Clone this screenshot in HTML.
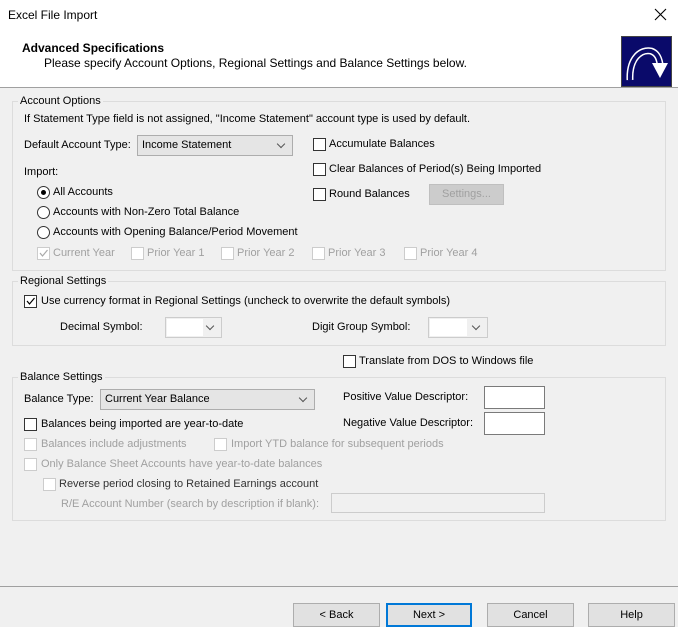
<!DOCTYPE html>
<html><head><meta charset="utf-8"><style>
*{box-sizing:border-box;margin:0;padding:0}
body{width:678px;height:620px;overflow:hidden;background:#f0f0f0;font-family:"Liberation Sans",sans-serif;font-size:11px;color:#000;position:relative}
.t{position:absolute;white-space:nowrap;line-height:16px}
.d{color:#a0a0a0}
.cb{position:absolute;width:13px;height:13px;border:1px solid #333;background:#fff}
.cb.dis{border-color:#ccc}
.rb{position:absolute;width:13px;height:13px;border:1px solid #333;border-radius:50%;background:#fff}
.grp{position:absolute;border:1px solid #dcdcdc}
.lbl{position:absolute;background:#f0f0f0;padding:0 2px;line-height:16px}
.combo{position:absolute;border:1px solid #adadad;background:#e5e5e5;line-height:19px;padding-left:4px}
.combo::after{content:"";position:absolute;right:8px;top:5px;width:5px;height:5px;border-right:1px solid #555;border-bottom:1px solid #555;transform:rotate(45deg)}
.box{position:absolute;border:1px solid #7a7a7a;background:#fff}
.btn{position:absolute;border:1px solid #adadad;background:#e1e1e1;text-align:center;line-height:23px}
</style></head><body>
<div style="position:absolute;left:0;top:0;width:678px;height:88px;background:#fff;border-bottom:1px solid #a0a0a0"></div>
<div class="t" style="left:8px;top:7px;font-size:12px">Excel File Import</div>
<svg style="position:absolute;left:654px;top:8px" width="13" height="13"><path d="M1 1L12 12M12 1L1 12" stroke="#000" stroke-width="1.1"/></svg>
<div class="t" style="left:22px;top:40px;font-weight:bold;font-size:12px">Advanced Specifications</div>
<div class="t" style="left:44px;top:55px;font-size:12px">Please specify Account Options, Regional Settings and Balance Settings below.</div>
<div style="position:absolute;left:621px;top:36px;width:51px;height:51px;background:#0a0a6a;border:1px solid #444"></div>
<svg style="position:absolute;left:621px;top:36px" width="51" height="51"><path d="M9 44 C8 22,20 13,30 15 C36 17,38 22,39 28" fill="none" stroke="#fff" stroke-width="7"/><path d="M9 44 C8 22,20 13,30 15 C36 17,38 22,39 28" fill="none" stroke="#0a0a6a" stroke-width="4"/><path d="M31 27L47 27L39 42Z" fill="#fff"/></svg>

<div class="grp" style="left:12px;top:101px;width:654px;height:170px"></div>
<div class="lbl" style="left:18px;top:93px">Account Options</div>
<div class="t" style="left:24px;top:111px">If Statement Type field is not assigned, "Income Statement" account type is used by default.</div>
<div class="t" style="left:24px;top:137px">Default Account Type:</div>
<div class="combo" style="left:137px;top:135px;width:156px;height:21px">Income Statement</div>
<div class="cb" style="left:313px;top:138px"></div><div class="t" style="left:329px;top:136px">Accumulate Balances</div>
<div class="cb" style="left:313px;top:163px"></div><div class="t" style="left:329px;top:161px">Clear Balances of Period(s) Being Imported</div>
<div class="cb" style="left:313px;top:188px"></div><div class="t" style="left:329px;top:186px">Round Balances</div>
<div class="btn d" style="left:429px;top:184px;width:75px;height:21px;line-height:19px;background:#ccc;border-color:#bfbfbf">Settings...</div>
<div class="t" style="left:24px;top:164px">Import:</div>
<div class="rb" style="left:37px;top:186px"><div style="position:absolute;left:3px;top:3px;width:5px;height:5px;border-radius:50%;background:#000"></div></div><div class="t" style="left:53px;top:184px">All Accounts</div>
<div class="rb" style="left:37px;top:206px"></div><div class="t" style="left:53px;top:204px">Accounts with Non-Zero Total Balance</div>
<div class="rb" style="left:37px;top:226px"></div><div class="t" style="left:53px;top:224px">Accounts with Opening Balance/Period Movement</div>
<div class="cb dis" style="left:37px;top:247px"><svg width="11" height="11" style="position:absolute;left:0;top:0"><path d="M2 5L4.5 8L9.5 2" fill="none" stroke="#aaa" stroke-width="1.2"/></svg></div><div class="t d" style="left:53px;top:245px">Current Year</div>
<div class="cb dis" style="left:131px;top:247px"></div><div class="t d" style="left:147px;top:245px">Prior Year 1</div>
<div class="cb dis" style="left:221px;top:247px"></div><div class="t d" style="left:237px;top:245px">Prior Year 2</div>
<div class="cb dis" style="left:312px;top:247px"></div><div class="t d" style="left:328px;top:245px">Prior Year 3</div>
<div class="cb dis" style="left:404px;top:247px"></div><div class="t d" style="left:420px;top:245px">Prior Year 4</div>

<div class="grp" style="left:12px;top:281px;width:654px;height:65px"></div>
<div class="lbl" style="left:18px;top:273px">Regional Settings</div>
<div class="cb" style="left:24px;top:295px"><svg width="11" height="11" style="position:absolute;left:0;top:0"><path d="M2 5L4.5 8L9.5 2" fill="none" stroke="#000" stroke-width="1.2"/></svg></div>
<div class="t" style="left:41px;top:293px">Use currency format in Regional Settings (uncheck to overwrite the default symbols)</div>
<div class="t" style="left:60px;top:319px">Decimal Symbol:</div>
<div class="combo" style="left:165px;top:317px;width:57px;height:21px;border-color:#ccc;background:#f0f0f0"><div style="position:absolute;left:1px;top:1px;width:36px;height:17px;background:#fff"></div></div>
<div class="t" style="left:312px;top:319px">Digit Group Symbol:</div>
<div class="combo" style="left:428px;top:317px;width:60px;height:21px;border-color:#ccc;background:#f0f0f0"><div style="position:absolute;left:1px;top:1px;width:37px;height:17px;background:#fff"></div></div>

<div class="cb" style="left:343px;top:355px"></div><div class="t" style="left:359px;top:353px">Translate from DOS to Windows file</div>

<div class="grp" style="left:12px;top:377px;width:654px;height:144px"></div>
<div class="lbl" style="left:18px;top:369px">Balance Settings</div>
<div class="t" style="left:24px;top:391px">Balance Type:</div>
<div class="combo" style="left:100px;top:389px;width:215px;height:21px">Current Year Balance</div>
<div class="t" style="left:343px;top:389px">Positive Value Descriptor:</div>
<div class="box" style="left:484px;top:386px;width:61px;height:23px"></div>
<div class="t" style="left:343px;top:415px">Negative Value Descriptor:</div>
<div class="box" style="left:484px;top:412px;width:61px;height:23px"></div>
<div class="cb" style="left:24px;top:418px"></div><div class="t" style="left:41px;top:416px">Balances being imported are year-to-date</div>
<div class="cb dis" style="left:24px;top:438px"></div><div class="t d" style="left:41px;top:436px">Balances include adjustments</div>
<div class="cb dis" style="left:214px;top:438px"></div><div class="t d" style="left:231px;top:436px">Import YTD balance for subsequent periods</div>
<div class="cb dis" style="left:24px;top:458px"></div><div class="t d" style="left:41px;top:456px">Only Balance Sheet Accounts have year-to-date balances</div>
<div class="cb dis" style="left:43px;top:478px"></div><div class="t" style="left:59px;top:476px;color:#333">Reverse period closing to Retained Earnings account</div>
<div class="t d" style="left:61px;top:496px">R/E Account Number (search by description if blank):</div>
<div class="box" style="left:331px;top:493px;width:214px;height:20px;border-color:#ccc;background:#f0f0f0"></div>

<div style="position:absolute;left:0;top:586px;width:678px;height:1px;background:#a0a0a0"></div>
<div class="btn" style="left:293px;top:603px;width:87px;height:24px">&lt; Back</div>
<div class="btn" style="left:386px;top:603px;width:86px;height:24px;border:2px solid #0078d7;line-height:21px">Next &gt;</div>
<div class="btn" style="left:487px;top:603px;width:87px;height:24px">Cancel</div>
<div class="btn" style="left:588px;top:603px;width:87px;height:24px">Help</div>
</body></html>
